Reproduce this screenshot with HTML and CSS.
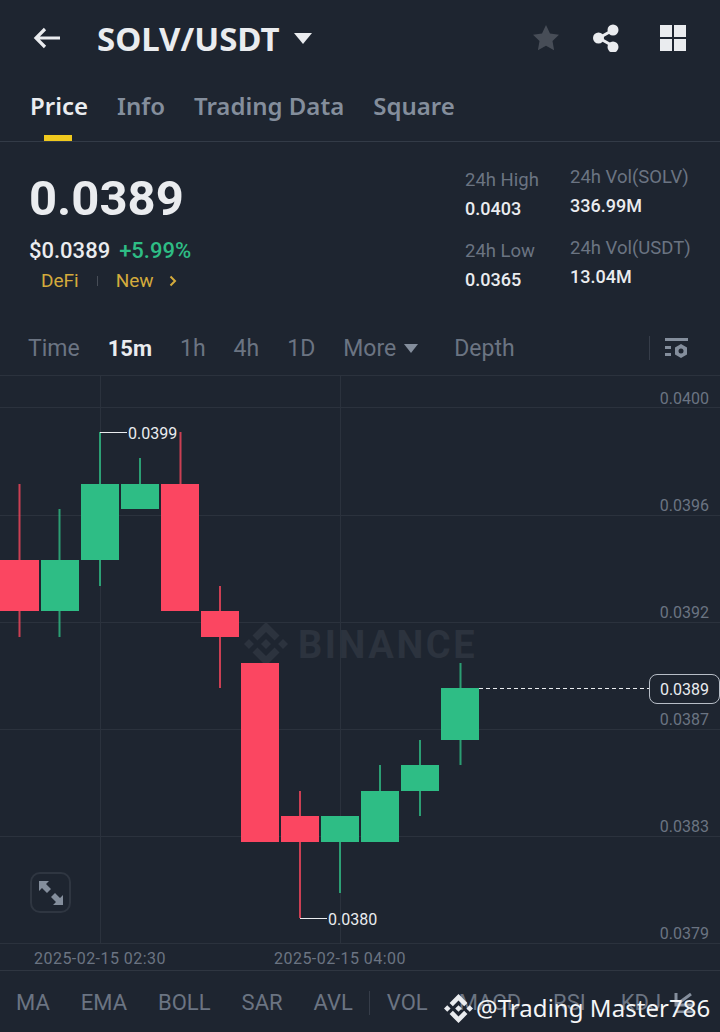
FILE: index.html
```html
<!DOCTYPE html>
<html lang="en">
<head>
  <meta charset="UTF-8">
  <meta name="viewport" content="width=device-width, initial-scale=1.0">
  <title>SOLV/USDT</title>
  <link rel="stylesheet" href="styles.css">
</head>
<body>
  <!-- Top bar -->
  <header class="topbar">
    <svg class="back" viewBox="0 0 30 24" width="30" height="24"><path d="M28 12H4M13 3l-9 9 9 9" fill="none" stroke="#eaecef" stroke-width="3.2"/></svg>
    <h1>SOLV/USDT</h1>
    <svg class="caret" viewBox="0 0 18 12" width="18" height="12"><path d="M0 1h18L9 12z" fill="#eaecef"/></svg>
    <div class="top-icons">
      <svg viewBox="0 0 28 28" width="28" height="28"><path d="M14 1l4 8.6 9 1.2-6.5 6.3 1.6 9.1L14 21.8l-8.1 4.4 1.6-9.1L1 10.800l9-1.200z" fill="#474d57"/></svg>
      <svg viewBox="0 0 28 28" width="28" height="28"><path d="M21 6L7 14l14 8" fill="none" stroke="#eaecef" stroke-width="3"/><circle cx="21" cy="6" r="5.500" fill="#eaecef"/><circle cx="6.500" cy="14" r="5.500" fill="#eaecef"/><circle cx="21" cy="23" r="5.500" fill="#eaecef"/></svg>
      <svg class="grid-icon" viewBox="0 0 28 28" width="28" height="28"><path d="M1 1h12v12H1zM15 1h12v12H15zM1 15h12v12H1zM15 15h12v12H15z" fill="#eaecef"/></svg>
    </div>
  </header>

  <!-- Tabs -->
  <nav class="tabs">
    <a class="tab active">Price</a>
    <a class="tab">Info</a>
    <a class="tab">Trading Data</a>
    <a class="tab">Square</a>
  </nav>

  <!-- Price summary -->
  <section class="summary">
    <div class="price-block">
      <div class="last-price">0.0389</div>
      <div class="price-sub"><span class="usd">$0.0389</span><span class="change">+5.99%</span></div>
      <div class="price-tags">
        <span>DeFi</span>
        <i class="tag-sep"></i>
        <span>New</span>
        <svg viewBox="0 0 8 12" width="8" height="12"><path d="M1.500 1.500L6 6l-4.500 4.500" fill="none" stroke="#d4ab3c" stroke-width="2"/></svg>
      </div>
    </div>
    <div class="stats stats-a">
      <div class="stat"><span>24h High</span><b>0.0403</b></div>
      <div class="stat"><span>24h Low</span><b>0.0365</b></div>
    </div>
    <div class="stats stats-b">
      <div class="stat"><span>24h Vol(SOLV)</span><b>336.99M</b></div>
      <div class="stat"><span>24h Vol(USDT)</span><b>13.04M</b></div>
    </div>
  </section>

  <!-- Interval bar -->
  <div class="intervals">
    <span>Time</span>
    <span class="current">15m</span>
    <span>1h</span>
    <span>4h</span>
    <span>1D</span>
    <span class="more">More <svg viewBox="0 0 14 9" width="14" height="9"><path d="M0 0h14L7 9z" fill="#848e9c"/></svg></span>
    <span class="depth">Depth</span>
    <i class="bar-sep"></i>
    <svg class="settings" viewBox="0 0 24 22" width="24" height="22">
      <path d="M1 1h23v3H1zM1 9h6v3H1zM1 16h6v3H1z" fill="#848e9c"/>
      <path d="M17 7l6 3.500v7L17 21l-6-3.500v-7z" fill="#848e9c"/>
      <circle cx="17" cy="14" r="2.500" fill="#1e2530"/>
    </svg>
  </div>

  <!-- Chart -->
  <section class="chart">
    <svg class="chart-svg" viewBox="0 376 720 594" width="720" height="594">
      <g class="grid">
        <path d="M0 407.500H720M0 515.500H720M0 622.500H720M0 729.500H720M0 836.500H720M100.500 376V943M340.500 376V943"/>
      </g>

      <!-- watermark -->
      <svg x="244" y="622" width="44" height="44" viewBox="0 0 126.610 126.610">
        <g fill="#2c333e">
          <path d="M38.730 53.200l24.590-24.580 24.600 24.600 14.300-14.310L63.320 0 24.430 38.900z"/>
          <path d="M0 63.310L14.300 49l14.310 14.310-14.310 14.300z"/>
          <path d="M38.730 73.410L63.320 98l24.600-24.600 14.310 14.290-38.910 38.920-38.910-38.900z"/>
          <path d="M98 63.310L112.300 49l14.310 14.300-14.310 14.320z"/>
          <path d="M77.830 63.300L63.320 48.780 48.810 63.280l14.510 14.500z"/>
        </g>
      </svg>
      <text class="wm-text" x="298" y="658">BINANCE</text>

      <!-- wicks -->
      <g class="wick-red">
        <path d="M19.500 484V637M180.500 432V484M220 586V688M300 791V918"/>
      </g>
      <g class="wick-green">
        <path d="M59.500 509V637M100 432V586M140 458V484M340 842V893M380 765V791M420 740V816M460.500 663V765"/>
      </g>

      <!-- candle bodies -->
      <g class="body-red">
        <rect x="0" y="560" width="39" height="51"/>
        <rect x="161" y="484" width="38" height="127"/>
        <rect x="201" y="611" width="38" height="26"/>
        <rect x="241" y="663" width="38" height="179"/>
        <rect x="281" y="816" width="38" height="26"/>
      </g>
      <g class="body-green">
        <rect x="41" y="560" width="38" height="51"/>
        <rect x="81" y="484" width="38" height="76"/>
        <rect x="121" y="484" width="38" height="25"/>
        <rect x="321" y="816" width="38" height="26"/>
        <rect x="361" y="791" width="38" height="51"/>
        <rect x="401" y="765" width="38" height="26"/>
        <rect x="441" y="688" width="38" height="52"/>
      </g>

      <!-- high / low markers -->
      <path class="marker" d="M100 432.500H127M300 918.500H327"/>
      <text class="mark-text" x="128" y="439">0.0399</text>
      <text class="mark-text" x="328" y="925">0.0380</text>

      <!-- last price line -->
      <path class="last-line" d="M479 688.500H649"/>

      <!-- axis -->
      <g class="axis">
        <text x="709" y="404">0.0400</text>
        <text x="709" y="511">0.0396</text>
        <text x="709" y="618">0.0392</text>
        <text x="709" y="725">0.0387</text>
        <text x="709" y="832">0.0383</text>
        <text x="709" y="939">0.0379</text>
      </g>
      <g class="time-axis">
        <text x="100" y="964">2025-02-15 02:30</text>
        <text x="340" y="964">2025-02-15 04:00</text>
      </g>
      <path class="grid-line" d="M0 943.500H720"/>
    </svg>

    <div class="last-tag">0.0389</div>
    <button class="expand">
      <svg viewBox="0 0 26 26" width="26" height="26"><path d="M1 1h10L8 4l5 5-4 4-5-5-3 3zM25 25H15l3-3-5-5 4-4 5 5 3-3z" fill="#848e9c"/></svg>
    </button>
  </section>

  <!-- Indicators -->
  <footer class="indicators">
    <span>MA</span>
    <span>EMA</span>
    <span>BOLL</span>
    <span>SAR</span>
    <span>AVL</span>
    <i class="bar-sep"></i>
    <span>VOL</span>
    <span class="wide">MACD</span>
    <span class="wider">RSI</span>
    <span>KDJ</span>
    <svg class="collapse" viewBox="0 0 20 20" width="20" height="20"><path d="M3 0v12h17M3 12L18 1M3 19h17" fill="none" stroke="#848e9c" stroke-width="3"/></svg>
  </footer>

  <!-- Repost credit on top of the screenshot -->
  <div class="credit">
    <svg viewBox="0 0 126.610 126.610" width="29" height="29">
      <g fill="#eaecef">
        <path d="M38.730 53.200l24.590-24.580 24.600 24.600 14.300-14.310L63.320 0 24.430 38.900z"/>
        <path d="M0 63.310L14.300 49l14.310 14.310-14.310 14.300z"/>
        <path d="M38.730 73.410L63.320 98l24.600-24.600 14.310 14.290-38.910 38.920-38.910-38.900z"/>
        <path d="M98 63.310L112.300 49l14.310 14.300-14.310 14.320z"/>
        <path d="M77.830 63.300L63.320 48.780 48.810 63.280l14.510 14.500z"/>
      </g>
    </svg>
    <span>@Trading Master786</span>
  </div>
</body>
</html>
```

FILE: styles.css
```css
/* General */
html, body {
  margin: 0;
  padding: 0;
}

body {
  width: 720px;
  height: 1032px;
  overflow: hidden;
  position: relative;
  background: #1e2530;
  color: #eaecef;
  font-family: 'Roboto', 'Noto Sans', sans-serif;
}

/* Top bar */
.topbar {
  display: flex;
  align-items: center;
  height: 76px;
  padding: 0 33px 0 32px;
}

.topbar h1 {
  margin: 0 0 0 35px;
  font-family: 'Noto Sans', sans-serif;
  font-size: 33px;
  font-weight: 700;
}

.caret {
  margin-left: 14px;
}

.top-icons {
  display: flex;
  gap: 32px;
  margin-left: auto;
}

.grid-icon {
  margin-left: 7px;
}

/* Tabs */
.tabs {
  display: flex;
  gap: 29px;
  height: 65px;
  padding-left: 30px;
  border-bottom: 1px solid #333b47;
  box-sizing: content-box;
  font-family: 'Noto Sans', sans-serif;
}

.tab {
  position: relative;
  padding-top: 13px;
  font-size: 24px;
  font-weight: 600;
  color: #848e9c;
}

.tab.active {
  color: #eaecef;
}

.tab.active::after {
  content: "";
  position: absolute;
  left: 14px;
  bottom: 0;
  width: 28px;
  height: 6px;
  background: #f0c91e;
}

/* Price summary */
.summary {
  display: flex;
  height: 182px;
  box-sizing: border-box;
  padding: 27px 0 0 29px;
}

.price-block {
  width: 436px;
}

.last-price {
  font-size: 49px;
  font-weight: 700;
  line-height: 60px;
}

.price-sub {
  display: flex;
  gap: 9px;
  margin-top: 8px;
  font-size: 22px;
  font-weight: 500;
  line-height: 28px;
}

.change {
  color: #2ebd85;
}

.price-tags {
  display: flex;
  align-items: center;
  margin: 3px 0 0 12px;
  font-size: 19px;
  line-height: 26px;
  color: #d4ab3c;
}

.tag-sep {
  width: 1px;
  height: 10px;
  margin: 0 18px;
  background: #474d57;
}

.price-tags svg {
  margin-left: 15px;
}

.stats {
  display: flex;
  flex-direction: column;
  gap: 18px;
}

.stats-a {
  width: 105px;
  margin-top: -1px;
}

.stats-b {
  margin-top: -4px;
}

.stat {
  display: flex;
  flex-direction: column;
  gap: 3px;
}

.stat span {
  font-size: 18.5px;
  line-height: 25px;
  color: #6b7482;
}

.stat b {
  font-size: 18px;
  font-weight: 500;
  line-height: 25px;
  color: #eaecef;
}

/* Interval bar */
.intervals {
  display: flex;
  align-items: center;
  height: 48px;
  padding: 0 0 3px 28px;
  font-size: 23px;
  color: #6b7482;
  border-bottom: 1px solid #2b323d;
}

.intervals span {
  margin-right: 28px;
}

.intervals .current {
  color: #eaecef;
  font-size: 22px;
  font-weight: 700;
}

.intervals .more {
  display: flex;
  align-items: center;
  gap: 8px;
  margin-right: 36px;
}

.intervals .depth {
  margin-right: 134px;
}

.bar-sep {
  width: 1px;
  height: 24px;
  background: #363d49;
}

.settings {
  margin-left: 14px;
}

/* Chart */
.chart {
  position: relative;
  height: 594px;
  border-bottom: 1px solid #2f3641;
}

.chart-svg {
  display: block;
}

.grid path,
.grid-line {
  stroke: #2b323d;
  stroke-width: 1;
  fill: none;
}

.wm-text {
  font-family: 'Roboto', sans-serif;
  font-size: 38px;
  font-weight: 700;
  letter-spacing: 2.6px;
  fill: #2c333e;
}

.wick-red path {
  stroke: #f6465d;
  stroke-opacity: 0.8;
  stroke-width: 2;
}

.wick-green path {
  stroke: #2ebd85;
  stroke-opacity: 0.8;
  stroke-width: 2;
}

.body-red rect {
  fill: #fb4661;
}

.body-green rect {
  fill: #2ebd85;
}

.marker {
  stroke: #eaecef;
  stroke-width: 1;
  fill: none;
}

.mark-text {
  font-size: 16px;
  fill: #eaecef;
}

.last-line {
  stroke: #eaecef;
  stroke-width: 1;
  stroke-dasharray: 4 3;
  fill: none;
}

.axis text {
  font-size: 16px;
  text-anchor: end;
  fill: #6b7482;
}

.time-axis text {
  font-size: 16px;
  letter-spacing: 0.45px;
  text-anchor: middle;
  fill: #6b7482;
}

.last-tag {
  position: absolute;
  left: 649px;
  top: 298px;
  width: 69px;
  height: 28px;
  border: 1px solid #b7bdc6;
  border-radius: 8px;
  font-size: 16px;
  line-height: 30px;
  text-align: center;
  color: #eaecef;
  background: #1e2530;
}

.expand {
  position: absolute;
  left: 30px;
  top: 496px;
  display: flex;
  align-items: center;
  justify-content: center;
  width: 41px;
  height: 41px;
  padding: 0;
  background: none;
  border: 2px solid #2f3641;
  border-radius: 10px;
}

/* Indicators */
.indicators {
  display: flex;
  align-items: center;
  height: 59px;
  padding: 2px 0 0 16px;
  font-size: 22px;
  color: #6b7482;
}

.indicators span {
  margin-right: 31px;
}

.indicators .bar-sep {
  margin: 0 17px 0 -15px;
}

.indicators .wide {
  margin-right: 32px;
}

.indicators .wider {
  margin-right: 35px;
}

.collapse {
  margin-left: -19px;
}

/* Repost credit */
.credit {
  position: absolute;
  left: 444px;
  top: 993px;
  display: flex;
  align-items: center;
  gap: 3px;
  font-family: 'Noto Sans', sans-serif;
  font-size: 24px;
  letter-spacing: 0.05px;
  line-height: 30px;
  color: #f5f6f7;
}
```
